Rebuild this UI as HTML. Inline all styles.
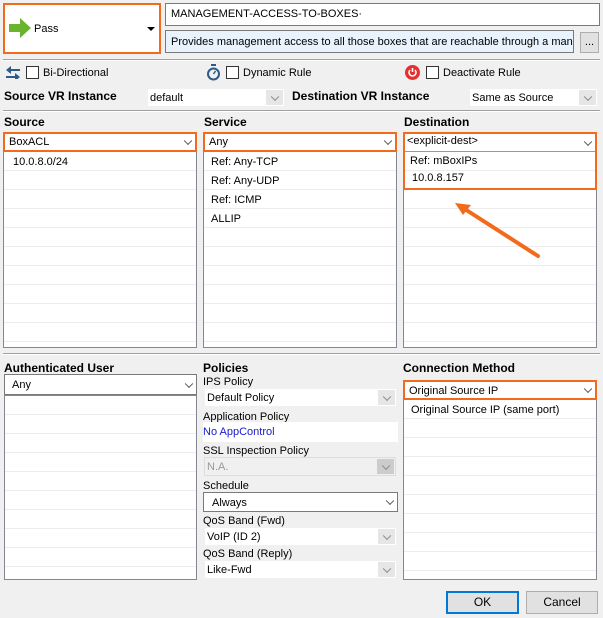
<!DOCTYPE html>
<html><head><meta charset="utf-8"><style>
*{box-sizing:border-box;margin:0;padding:0}
body{width:603px;height:618px;background:#f0f0f0;font-family:"Liberation Sans",Arial,sans-serif;font-size:11px;color:#000;position:relative;overflow:hidden}
.a{position:absolute}
.b{font-weight:bold;font-size:12px}
.w{background:#fff}
.hr{position:absolute;height:2px;border-top:1px solid #a0a0a0;border-bottom:1px solid #fff}
.list{position:absolute;background:#fff;border:1px solid #828790;
background-image:repeating-linear-gradient(to bottom,transparent 0,transparent 18px,#ececec 18px,#ececec 19px)}
.org{position:absolute;border:2px solid #f26b1d;background:#fff}
.chev{position:absolute;right:4px;top:50%;width:6px;height:6px;border-right:1.5px solid #555;border-bottom:1.5px solid #555;transform:translateY(-70%) rotate(45deg)}
.dd{position:absolute;right:1px;top:1px;bottom:1px;width:17px;background:#e6e6e6}
.dd .chev{right:5px;border-color:#888;border-width:1px}
.cb{position:absolute;width:13px;height:13px;border:1px solid #333;background:#fff}
.it{position:absolute;left:7px}
</style></head><body>
<!-- Pass -->
<div class="org" style="left:3px;top:3px;width:158px;height:51px"></div>
<svg class="a" style="left:8px;top:17px" width="24" height="22"><path d="M1 7h11V1l11 10-11 10v-6H1z" fill="#6ab42d"/></svg>
<div class="a" style="left:34px;top:23px;font-size:11px">Pass</div>
<div class="a" style="left:147px;top:27px;border-left:4px solid transparent;border-right:4px solid transparent;border-top:4px solid #000"></div>
<div class="a w" style="left:165px;top:3px;width:435px;height:23px;border:1px solid #7a7a7a"></div>
<div class="a" style="left:171px;top:8px">MANAGEMENT-ACCESS-TO-BOXES·</div>
<div class="a" style="left:165px;top:30px;width:409px;height:23px;border:1px solid #7a7a7a;background:#e8f3fe;overflow:hidden;white-space:nowrap;padding:5px 0 0 5px">Provides management access to all those boxes that are reachable through a mana</div>
<div class="a" style="left:580px;top:32px;width:19px;height:21px;border:1px solid #adadad;background:#e1e1e1;text-align:center;line-height:18px">...</div>
<div class="hr" style="left:3px;top:59px;width:597px"></div>
<!-- row icons -->
<svg class="a" style="left:5px;top:66px" width="16" height="13"><path d="M15 3H6V0L1 4l5 4V5h9z M1 10h9V7l5 4-5 4v-3H1z" fill="#2f5a8a"/></svg>
<div class="cb" style="left:26px;top:66px"></div><div class="a" style="left:43px;top:67px">Bi-Directional</div>
<svg class="a" style="left:206px;top:64px" width="15" height="17"><rect x="5" y="0" width="5" height="2" fill="#2f5a8a"/><circle cx="7.5" cy="10" r="5.5" fill="none" stroke="#2f5a8a" stroke-width="2"/><path d="M7.5 10l2-3" stroke="#2f5a8a" stroke-width="1.5"/></svg>
<div class="cb" style="left:226px;top:66px"></div><div class="a" style="left:243px;top:67px">Dynamic Rule</div>
<svg class="a" style="left:405px;top:65px" width="15" height="15"><circle cx="7.5" cy="7.5" r="7.5" fill="#e53030"/><path d="M5 5a3.5 3.5 0 1 0 5 0" fill="none" stroke="#fff" stroke-width="1.6"/><path d="M7.5 3v4" stroke="#fff" stroke-width="1.6"/></svg>
<div class="cb" style="left:426px;top:66px"></div><div class="a" style="left:443px;top:67px">Deactivate Rule</div>
<!-- VR -->
<div class="a b" style="left:4px;top:89px">Source VR Instance</div>
<div class="a w" style="left:148px;top:89px;width:136px;height:17px"><div class="a" style="left:2px;top:3px">default</div><div class="dd"><div class="chev"></div></div></div>
<div class="a b" style="left:292px;top:89px">Destination VR Instance</div>
<div class="a w" style="left:470px;top:89px;width:127px;height:17px"><div class="a" style="left:2px;top:3px">Same as Source</div><div class="dd"><div class="chev"></div></div></div>
<div class="hr" style="left:3px;top:110px;width:597px"></div>
<!-- Source -->
<div class="a b" style="left:4px;top:115px">Source</div>
<div class="a b" style="left:204px;top:115px">Service</div>
<div class="a b" style="left:404px;top:115px">Destination</div>
<div class="list" style="left:3px;top:151px;width:194px;height:197px"></div>
<div class="org" style="left:3px;top:132px;width:194px;height:20px"><div class="a" style="left:4px;top:2px">BoxACL</div><div class="chev"></div></div>
<div class="a" style="left:13px;top:156px">10.0.8.0/24</div>
<div class="list" style="left:203px;top:151px;width:194px;height:197px"></div>
<div class="org" style="left:203px;top:132px;width:194px;height:20px"><div class="a" style="left:4px;top:2px">Any</div><div class="chev"></div></div>
<div class="a" style="left:211px;top:156px">Ref: Any-TCP</div>
<div class="a" style="left:211px;top:175px">Ref: Any-UDP</div>
<div class="a" style="left:211px;top:194px">Ref: ICMP</div>
<div class="a" style="left:211px;top:213px">ALLIP</div>
<div class="list" style="left:403px;top:151px;width:194px;height:197px"></div>
<div class="a" style="left:403px;top:132px;width:194px;height:58px;border:2px solid #f26b1d"></div>
<div class="a" style="left:405px;top:134px;width:190px;height:18px;background:#fff;border-bottom:1px solid #999"><div class="a" style="left:2px;top:1px">&lt;explicit-dest&gt;</div><div class="chev"></div></div>
<div class="a" style="left:410px;top:155px">Ref: mBoxIPs</div>
<div class="a" style="left:412px;top:172px">10.0.8.157</div>
<svg class="a" style="left:450px;top:198px" width="95" height="65"><path d="M88 58L10 8" stroke="#f26b1d" stroke-width="4" stroke-linecap="round"/><path d="M5 5l16 2-8 10z" fill="#f26b1d"/></svg>
<div class="hr" style="left:3px;top:353px;width:597px"></div>
<!-- bottom -->
<div class="a b" style="left:4px;top:361px">Authenticated User</div>
<div class="a w" style="left:4px;top:374px;width:193px;height:21px;border:1px solid #7a7a7a"><div class="a" style="left:7px;top:4px">Any</div><div class="chev" style="border-width:1px"></div></div>
<div class="list" style="left:4px;top:395px;width:193px;height:185px"></div>
<div class="a b" style="left:203px;top:361px">Policies</div>
<div class="a" style="left:203px;top:376px">IPS Policy</div>
<div class="a w" style="left:205px;top:389px;width:191px;height:17px"><div class="a" style="left:2px;top:3px">Default Policy</div><div class="dd"><div class="chev"></div></div></div>
<div class="a" style="left:203px;top:411px">Application Policy</div>
<div class="a w" style="left:203px;top:422px;width:195px;height:20px"><div class="a" style="left:0;top:4px;color:#1a1acc">No AppControl</div></div>
<div class="a" style="left:203px;top:445px">SSL Inspection Policy</div>
<div class="a" style="left:204px;top:457px;width:192px;height:19px;background:#f0f0f0;border:1px solid #ddd"><div class="a" style="left:2px;top:3px;color:#999">N.A.</div><div class="dd" style="background:#ccc"><div class="chev"></div></div></div>
<div class="a" style="left:203px;top:480px">Schedule</div>
<div class="a w" style="left:203px;top:492px;width:195px;height:20px;border:1px solid #7a7a7a"><div class="a" style="left:8px;top:4px">Always</div><div class="chev" style="border-width:1px"></div></div>
<div class="a" style="left:203px;top:515px">QoS Band (Fwd)</div>
<div class="a w" style="left:205px;top:528px;width:191px;height:17px"><div class="a" style="left:2px;top:3px">VoIP (ID 2)</div><div class="dd"><div class="chev"></div></div></div>
<div class="a" style="left:203px;top:548px">QoS Band (Reply)</div>
<div class="a w" style="left:205px;top:561px;width:191px;height:17px"><div class="a" style="left:2px;top:3px">Like-Fwd</div><div class="dd"><div class="chev"></div></div></div>
<div class="a b" style="left:403px;top:361px">Connection Method</div>
<div class="list" style="left:403px;top:399px;width:194px;height:181px"></div>
<div class="org" style="left:403px;top:380px;width:194px;height:20px"><div class="a" style="left:4px;top:3px">Original Source IP</div><div class="chev" style="border-width:1px"></div></div>
<div class="a" style="left:411px;top:404px">Original Source IP (same port)</div>
<div class="a" style="left:446px;top:591px;width:73px;height:23px;border:2px solid #0078d7;background:#e1e1e1;text-align:center;line-height:19px;font-size:12px">OK</div>
<div class="a" style="left:526px;top:591px;width:72px;height:23px;border:1px solid #adadad;background:#e1e1e1;text-align:center;line-height:21px;font-size:12px">Cancel</div>
</body></html>
